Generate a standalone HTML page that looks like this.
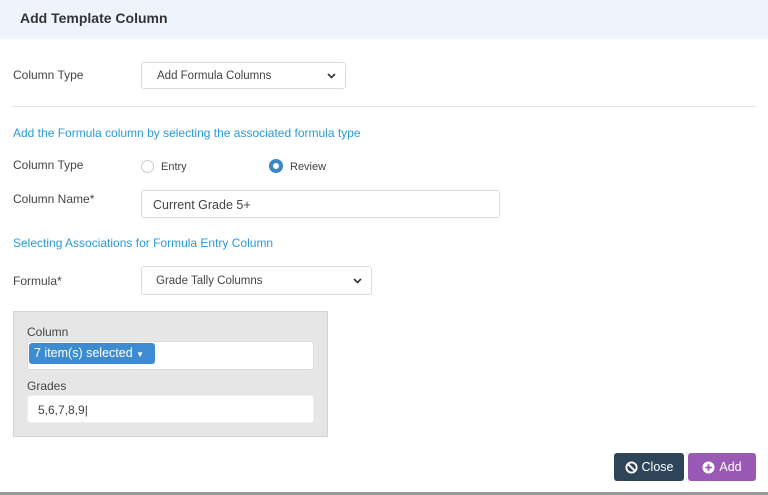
<!DOCTYPE html>
<html><head><style>
*{box-sizing:border-box;margin:0;padding:0}
body{width:768px;height:495px;background:#fff;font-family:"Liberation Sans",sans-serif;position:relative;overflow:hidden}
.a{position:absolute}
.hdr{left:0;top:0;width:768px;height:39px;background:#eef4fc}
.lbl{font-size:12px;color:#444}
.box{background:#fff;border:1px solid #dcdcdc;border-radius:3px;font-size:11px;color:#444}
.blue{font-size:12px;color:#2a9ad6}
.btn{height:28px;border-radius:3px;color:#fff;font-size:12.5px;display:flex;align-items:center;justify-content:center;gap:4px}
.chev{position:absolute;right:9px;top:50%;margin-top:-3px}
</style></head><body>
<div class="a hdr"></div>
<div class="a" style="left:20px;top:10px;font-size:14px;font-weight:bold;color:#333">Add Template Column</div>
<div class="a lbl" style="left:13px;top:68px">Column Type</div>
<div class="a box" style="left:141px;top:62px;width:205px;height:27px;padding:7px 15px;font-size:11.5px">Add Formula Columns<svg class="chev" width="9" height="6" viewBox="0 0 9 6"><path d="M1 1l3.5 3.5L8 1" fill="none" stroke="#333" stroke-width="1.6"/></svg></div>
<div class="a" style="left:12px;top:106px;width:744px;height:1px;background:#e6e6e6"></div>
<div class="a blue" style="left:13px;top:126px">Add the Formula column by selecting the associated formula type</div>
<div class="a lbl" style="left:13px;top:158px">Column Type</div>
<div class="a" style="left:141px;top:160px;width:13px;height:13px;border:1px solid #ccc;border-radius:50%"></div>
<div class="a lbl" style="left:161px;top:161px;font-size:11px">Entry</div>
<div class="a" style="left:269px;top:159px;width:14px;height:14px;border:4px solid #3d85c6;border-radius:50%"></div>
<div class="a lbl" style="left:290px;top:161px;font-size:11px">Review</div>
<div class="a lbl" style="left:13px;top:192px">Column Name*</div>
<div class="a box" style="left:141px;top:190px;width:359px;height:28px;padding:7px 11px;font-size:12.5px">Current Grade 5+</div>
<div class="a blue" style="left:13px;top:236px">Selecting Associations for Formula Entry Column</div>
<div class="a lbl" style="left:13px;top:274px">Formula*</div>
<div class="a box" style="left:141px;top:266px;width:231px;height:29px;padding:8px 14px;font-size:11.5px">Grade Tally Columns<svg class="chev" width="9" height="6" viewBox="0 0 9 6"><path d="M1 1l3.5 3.5L8 1" fill="none" stroke="#333" stroke-width="1.6"/></svg></div>
<div class="a" style="left:13px;top:311px;width:315px;height:126px;background:#e6e6e6;border:1px solid #d4d4d4"></div>
<div class="a lbl" style="left:27px;top:325px">Column</div>
<div class="a box" style="left:27px;top:341px;width:287px;height:29px"></div>
<div class="a" style="left:29px;top:343px;width:126px;height:21px;background:#3d8bd0;border-radius:3px;color:#fff;font-size:12.5px;padding:3px 5px">7 item(s) selected <span style="font-size:8px">&#9660;</span></div>
<div class="a lbl" style="left:27px;top:379px">Grades</div>
<div class="a box" style="left:27px;top:395px;width:287px;height:28px;padding:7px 10px;font-size:12px;border-color:#eee">5,6,7,8,9|</div>
<div class="a btn" style="left:614px;top:453px;width:70px;background:#2e4459">
<svg width="13" height="13" viewBox="0 0 14 14"><circle cx="7" cy="7" r="5.5" fill="none" stroke="#fff" stroke-width="2"/><line x1="3" y1="3" x2="11" y2="11" stroke="#fff" stroke-width="2"/></svg>Close</div>
<div class="a btn" style="left:688px;top:453px;width:68px;background:#9b59b6">
<svg width="13" height="13" viewBox="0 0 14 14"><circle cx="7" cy="7" r="6.5" fill="#fff"/><path d="M7 3.5v7M3.5 7h7" stroke="#9b59b6" stroke-width="2"/></svg>Add</div>
<div class="a" style="left:0;top:492px;width:768px;height:3px;background:#999"></div>
</body></html>
